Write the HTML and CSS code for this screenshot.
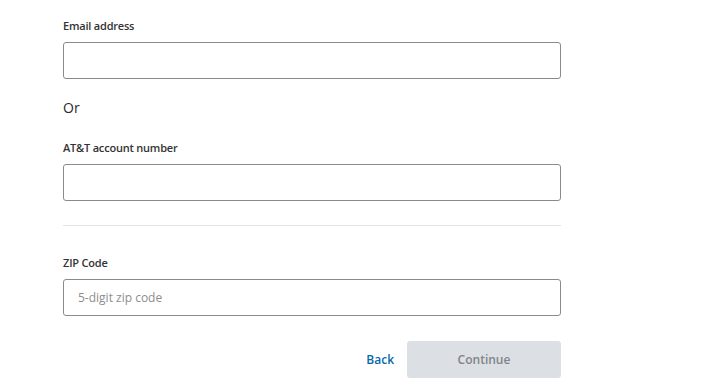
FILE: index.html
```html
<!DOCTYPE html>
<html lang="en">
<head>
    <meta charset="UTF-8">
    <meta name="viewport" content="width=device-width, initial-scale=1.0">
    <title>Find your account</title>
    <link rel="stylesheet" href="styles.css">
</head>
<body>
    <form class="lookup-form">
        <div class="field">
            <label class="field-label" for="email">Email address</label>
            <input class="field-input" id="email" type="text">
        </div>

        <p class="or-text">Or</p>

        <div class="field">
            <label class="field-label" for="account">AT&amp;T account number</label>
            <input class="field-input" id="account" type="text">
        </div>

        <hr class="divider">

        <div class="field">
            <label class="field-label" for="zip">ZIP Code</label>
            <input class="field-input" id="zip" type="text" placeholder="5-digit zip code">
        </div>

        <div class="button-row">
            <a class="back-link" href="#">Back</a>
            <button class="continue-button" type="button" disabled>Continue</button>
        </div>
    </form>
</body>
</html>
```

FILE: styles.css
```css
body {
    margin: 0;
    background-color: #fff;
    font-family: 'Open Sans', sans-serif;
    color: #333;
}

.lookup-form {
    width: 498px;
    padding: 18px 0 0 63px;
}

.field {
    display: flex;
    flex-direction: column;
}

.field-label {
    font-size: 11px;
    line-height: 16px;
    font-weight: 600;
    letter-spacing: -0.2px;
    color: #333;
    margin-bottom: 8px;
}

.field-input {
    box-sizing: border-box;
    height: 37px;
    border: 1px solid #8a8a8a;
    border-radius: 3px;
    padding: 0 14px;
    font-family: 'Open Sans', sans-serif;
    font-size: 12px;
    color: #333;
    outline: none;
}

.field-input::placeholder {
    color: #8d8d8d;
}

.or-text {
    font-size: 14px;
    line-height: 20px;
    margin: 19px 0 22px;
    color: #2a2a2a;
}

.divider {
    border: none;
    border-top: 1px solid #e4e4e4;
    margin: 24px 0 29px;
}

.button-row {
    display: flex;
    justify-content: flex-end;
    align-items: center;
    gap: 13px;
    margin-top: 25px;
}

.back-link {
    font-size: 12px;
    font-weight: 600;
    color: #0568ae;
    text-decoration: none;
}

.continue-button {
    width: 154px;
    height: 37px;
    border: none;
    border-radius: 3px;
    background-color: #dcdfe3;
    color: #80858a;
    font-family: 'Open Sans', sans-serif;
    font-size: 12px;
    font-weight: 600;
}
```
